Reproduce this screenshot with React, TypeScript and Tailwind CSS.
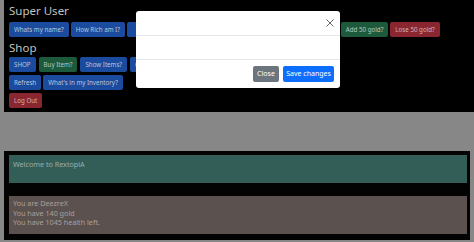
import React from "react";

const font = { fontFamily: '"Noto Sans", "Open Sans", sans-serif' };

type Tone = "blue" | "green" | "red";

const tones: Record<Tone, string> = {
  blue: "bg-[#1a4b9e] text-[#bcc6da]",
  green: "bg-[#1d5a3c] text-[#b6c6bd]",
  red: "bg-[#8a2630] text-[#d0b3b6]",
};

const Btn = ({ label, tone = "blue", className = "" }: { label: string; tone?: Tone; className?: string }) => (
  <button
    className={`h-[15px] px-[5px] rounded-[2px] text-[6.2px] leading-[15px] whitespace-nowrap ${tones[tone]} ${className}`}
  >
    {label}
  </button>
);

export default function App() {
  return (
    <div className="relative w-[474px] h-[242px] overflow-hidden bg-[#878787]" style={font}>
      {/* Game controls */}
      <div className="ml-[4px] h-[112px] bg-black pl-[5px] pt-[3px]">
        <h4 className="text-[11.5px] leading-[15px] text-[#c2c2c2]">Super User</h4>
        <div className="mt-[4px] flex gap-[2px]">
          <Btn label="Whats my name?" />
          <Btn label="How Rich am I?" />
          <Btn label="How healthy am I?" className="w-[105px]" />
          <Btn label="Heal me?" className="w-[105px]" />
          <Btn label="Add 50 gold?" tone="green" />
          <Btn label="Lose 50 gold?" tone="red" />
        </div>
        <h4 className="mt-[2px] text-[11.5px] leading-[17px] text-[#c2c2c2]">Shop</h4>
        <div className="mt-[1px] flex flex-col gap-[3px]">
          <div className="flex gap-[3px]">
            <Btn label="SHOP" />
            <Btn label="Buy Item?" tone="green" />
            <Btn label="Show Items?" />
            <Btn label="Clear Items?" />
          </div>
          <div className="flex gap-[2px]">
            <Btn label="Refresh" />
            <Btn label="What's in my Inventory?" />
          </div>
          <div className="flex">
            <Btn label="Log Out" tone="red" />
          </div>
        </div>
      </div>

      {/* Status output */}
      <div className="ml-[4px] mr-[4px] mt-[39px] h-[89px] bg-[#030303] pt-[4px] pl-[5px] pr-[3px] flex flex-col gap-[13px]">
        <div className="h-[28px] bg-[#335e58] px-[4px] pt-[5px] text-[7.2px] leading-[9px] text-[#9eaba7]">
          Welcome to RextopiA
        </div>
        <div className="h-[38px] bg-[#5b514f] px-[4px] pt-[3px] text-[7.2px] leading-[9.5px] text-[#a8a09d]">
          <p>You are DeezreX</p>
          <p>You have 140 gold</p>
          <p>You have 1045 health left.</p>
        </div>
      </div>

      {/* Modal */}
      <div className="absolute left-[136px] top-[11px] w-[204px] h-[77px] bg-white rounded-[3px] flex flex-col">
        <div className="h-[25px] border-b border-[#e3e6ea] flex items-center justify-end pr-[6px]">
          <svg width="8" height="8" viewBox="0 0 8 8" className="text-[#555]">
            <path d="M0.5 0.5 L7.5 7.5 M7.5 0.5 L0.5 7.5" stroke="currentColor" strokeWidth="0.9" />
          </svg>
        </div>
        <div className="h-[23px]" />
        <div className="flex-1 border-t border-[#e3e6ea] flex items-center justify-end gap-[4px] pr-[6px]">
          <button className="h-[16px] w-[26px] rounded-[2px] bg-[#6c757d] text-white text-[7px] leading-[16px]">Close</button>
          <button className="h-[16px] w-[51px] rounded-[2px] bg-[#0d6efd] text-white text-[7px] leading-[16px]">Save changes</button>
        </div>
      </div>
    </div>
  );
}
